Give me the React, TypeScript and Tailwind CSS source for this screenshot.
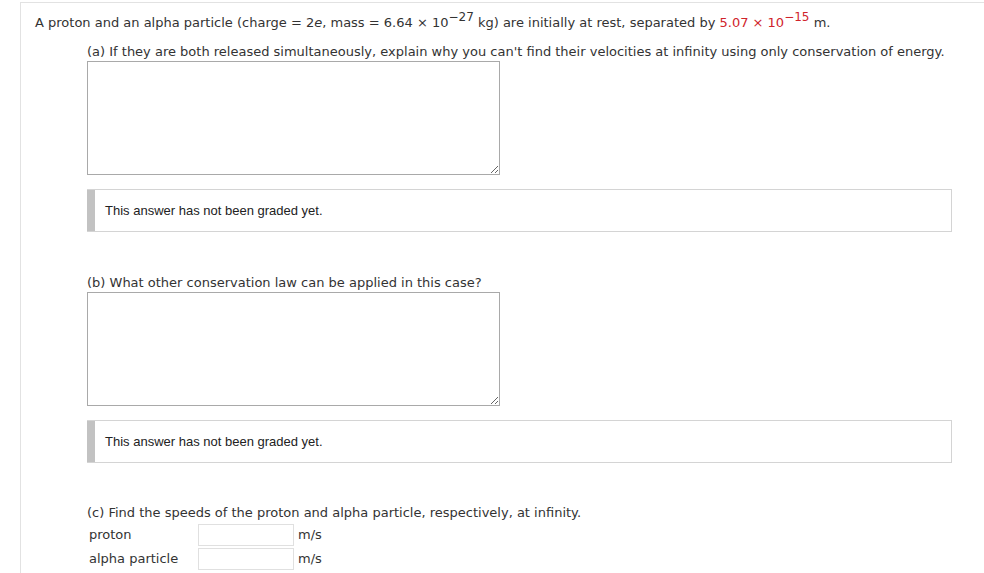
import { useState } from "react";

function Feedback() {
  return (
    <div className="flex h-[43px] w-[865px] border border-[#d4d4d4] border-l-0">
      <div className="w-[8px] bg-[#c2c2c2]" />
      <div className="flex items-center pl-[10px] font-['Liberation_Sans',Arial,sans-serif] text-[13px] text-[#222]">
        This answer has not been graded yet.
      </div>
    </div>
  );
}

function Essay({ value, onChange }: { value: string; onChange: (v: string) => void }) {
  return (
    <textarea
      value={value}
      onChange={(e) => onChange(e.target.value)}
      className="block h-[114px] w-[413px] resize border border-[#a9a9a9] bg-white outline-none"
    />
  );
}

export default function App() {
  const [a, setA] = useState("");
  const [b, setB] = useState("");
  const [proton, setProton] = useState("");
  const [alpha, setAlpha] = useState("");

  return (
    <div className="h-[573px] w-[984px] overflow-hidden bg-white pt-[2px] font-['DejaVu_Sans',Verdana,sans-serif] text-[13px] text-[#333]">
      <div className="h-full border-t border-l border-[#e2e2e2] ml-[20px]">
        <div className="pl-[14px] pt-[11px] leading-[18px]">
          A proton and an alpha particle (charge = 2<i>e</i>, mass = 6.64 × 10
          <sup className="top-[-6px] text-[12px]">−27</sup> kg) are initially at rest, separated by{" "}
          <span className="text-[#d0232b]">
            5.07 × 10<sup className="top-[-6px] text-[12px]">−15</sup>
          </span>{" "}
          m.
        </div>

        <div className="ml-[66px] mt-[11px]">
          <div className="leading-[18px]">
            (a) If they are both released simultaneously, explain why you can't find their velocities at infinity using only conservation of energy.
          </div>
          <Essay value={a} onChange={setA} />
          <div className="mt-[14px]">
            <Feedback />
          </div>

          <div className="mt-[42px] leading-[18px]">(b) What other conservation law can be applied in this case?</div>
          <Essay value={b} onChange={setB} />
          <div className="mt-[14px]">
            <Feedback />
          </div>

          <div className="mt-[41px] leading-[18px]">
            (c) Find the speeds of the proton and alpha particle, respectively, at infinity.
          </div>
          <div className="mt-[2px] grid grid-cols-[111px_96px_auto] items-center gap-y-[2px]">
            <span className="pl-[2px]">proton</span>
            <input
              value={proton}
              onChange={(e) => setProton(e.target.value)}
              className="h-[22px] w-[96px] border border-[#e0e0e0] outline-none"
            />
            <span className="pl-[4px]">m/s</span>
            <span className="pl-[2px]">alpha particle</span>
            <input
              value={alpha}
              onChange={(e) => setAlpha(e.target.value)}
              className="h-[22px] w-[96px] border border-[#e0e0e0] outline-none"
            />
            <span className="pl-[4px]">m/s</span>
          </div>
        </div>
      </div>
    </div>
  );
}
